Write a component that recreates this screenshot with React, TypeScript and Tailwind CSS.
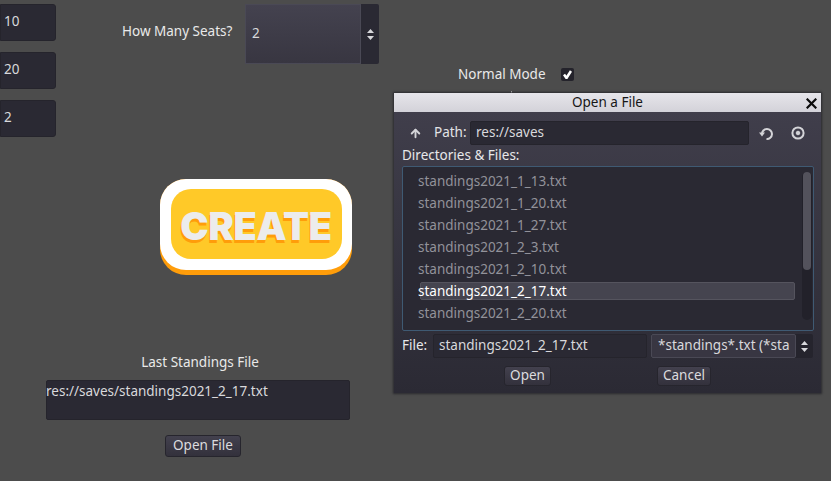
import { ArrowUp } from "lucide-react";

const files = [
  "standings2021_1_13.txt",
  "standings2021_1_20.txt",
  "standings2021_1_27.txt",
  "standings2021_2_3.txt",
  "standings2021_2_10.txt",
  "standings2021_2_17.txt",
  "standings2021_2_20.txt",
];

function UpDown() {
  return (
    <svg width="7" height="11" viewBox="0 0 7 11" className="fill-[#d8d8dc]">
      <path d="M3.5 0 7 4H0z" />
      <path d="M0 7h7l-3.5 4z" />
    </svg>
  );
}

function NumberBox({ value }: { value: string }) {
  return (
    <div className="flex h-[37px] w-[56px] items-center rounded-r-[3px] border border-[#25242c] bg-[#2a2933] pb-[2px] pl-[3px] text-[#d9d9dc]">
      {value}
    </div>
  );
}

function GodotButton({ label, className }: { label: string; className: string }) {
  return (
    <button
      className={`flex items-center justify-center rounded-[3px] border border-[#26252d] bg-gradient-to-b from-[#43414e] to-[#33313c] text-[#dcdcdf] ${className}`}
    >
      {label}
    </button>
  );
}

function FileDialog() {
  return (
    <div className="absolute left-[394px] top-[93px] flex h-[300px] w-[427px] flex-col shadow-[0_0_2px_1px_#2a2a2e]">
      <div className="relative flex h-[19px] items-center justify-center bg-gradient-to-b from-[#e6e5ea] to-[#d3d2d9] text-[#161616]">
        Open a File
        <svg width="11" height="11" viewBox="0 0 11 11" className="absolute right-[4px] top-[5px] stroke-[#0b0b0b] stroke-[2.2]">
          <path d="M.7.7l9.6 9.6M10.3.7.7 10.3" />
        </svg>
      </div>

      <div className="flex flex-1 flex-col bg-gradient-to-b from-[#403e4b] to-[#2b2a34] px-[8px]">
        <div className="mt-[9px] flex h-[24px] items-center text-[#e3e3e6]">
          <ArrowUp size={13} strokeWidth={3.5} className="ml-[7px] text-[#d4d4d8]" />
          <span className="mb-[2px] ml-[12px] w-[36px]">Path:</span>
          <div className="flex h-[24px] w-[279px] items-center rounded-[2px] border border-[#25242c] bg-[#2a2933] pb-[2px] pl-[5px] text-[#d9d9dc]">
            res://saves
          </div>
          <svg width="15" height="15" viewBox="0 0 15 15" className="ml-[10px] fill-none stroke-[#d4d4d8] stroke-[2]">
            <path d="M3 8.5a5 5 0 1 1 4.5 4.5" />
            <path d="M0 6.6h6L3 10.6z" className="fill-[#d4d4d8] stroke-none" />
          </svg>
          <svg width="14" height="14" viewBox="0 0 14 14" className="ml-[17px] fill-none stroke-[#d4d4d8]">
            <circle cx="7" cy="7" r="5.6" strokeWidth="2" />
            <circle cx="7" cy="7" r="1.8" className="fill-[#d4d4d8]" strokeWidth="1" />
          </svg>
        </div>

        <div className="mt-[1px] h-[20px] leading-[18px] text-[#e8e8ea]">Directories &amp; Files:</div>

        <div className="relative h-[165px] w-[412px] rounded-[2px] border border-[#3f5a73] bg-[#2a2933] pl-[15px] pt-[3px]">
          {files.map((name) => {
            const selected = name === "standings2021_2_17.txt";
            return (
              <div
                key={name}
                className={`h-[22px] leading-[22px] ${selected ? "text-white" : "text-[#92929a]"}`}
              >
                {selected ? (
                  <div className="relative">
                    <div className="absolute left-[2px] top-[2px] h-[18px] w-[375px] rounded-[2px] border border-[#55545e] bg-[#45444f]" />
                    <span className="relative">{name}</span>
                  </div>
                ) : (
                  name
                )}
              </div>
            );
          })}
          <div className="absolute right-[1px] top-[5px] h-[148px] w-[10px] rounded-full bg-[#22212a]">
            <div className="mx-auto h-[98px] w-[8px] rounded-full bg-[#53525c]" />
          </div>
        </div>

        <div className="mt-[3px] flex h-[24px] items-center text-[#e8e8ea]">
          <span className="mb-[2px] w-[31px]">File:</span>
          <div className="flex h-[24px] w-[214px] items-center rounded-[2px] border border-[#25242c] bg-[#2a2933] pb-[2px] pl-[5px] text-[#d9d9dc]">
            standings2021_2_17.txt
          </div>
          <div className="ml-[4px] flex h-[24px] w-[162px] items-center rounded-[2px] bg-[#25242d]">
            <div className="h-full w-[145px] overflow-hidden whitespace-nowrap rounded-[2px] border border-[#4a4955] bg-[#383642] pl-[6px] leading-[20px] text-[#d9d9dc]">
              *standings*.txt (*sta
            </div>
            <div className="flex flex-1 justify-center">
              <UpDown />
            </div>
          </div>
        </div>

        <div className="mt-[8px] flex">
          <GodotButton label="Open" className="ml-[102px] h-[20px] w-[47px] pb-[2px]" />
          <GodotButton label="Cancel" className="ml-[106px] h-[20px] w-[54px] pb-[2px]" />
        </div>
      </div>
    </div>
  );
}

export default function App() {
  return (
    <div className="relative h-[481px] w-[831px] overflow-hidden bg-[#4c4c4c] font-['Noto_Sans',sans-serif] text-[13.5px]">
      <div className="flex">
        <div className="flex w-[46px] flex-col">
          <div className="mt-[4px] flex flex-col gap-[11px]">
            <NumberBox value="10" />
            <NumberBox value="20" />
            <NumberBox value="2" />
          </div>
        </div>

        <div className="ml-[76px] flex flex-col">
          <div className="flex">
            <div className="mt-[21px] w-[123px] text-[#e9e9e9]">How Many Seats?</div>
            <div className="mt-[4px] flex h-[60px] w-[134px] rounded-[2px] bg-[#2a2933]">
              <div className="flex h-full w-[116px] items-center border border-[#4a4955] bg-gradient-to-b from-[#44424f] to-[#383641] pb-[2px] pl-[6px] text-[#d9d9dc]">
                2
              </div>
              <div className="flex flex-1 items-center justify-center">
                <UpDown />
              </div>
            </div>
            <div className="ml-[79px] mt-[64px] flex h-[20px] items-center text-[#e9e9e9]">
              <span className="w-[103px]">Normal Mode</span>
              <div className="flex h-[13px] w-[13px] items-center justify-center rounded-[2px] bg-[#24232b]">
                <svg width="9" height="9" viewBox="0 0 9 9" className="fill-none stroke-white stroke-[2.6]">
                  <path d="M1 4.5 3.5 8 8 1" />
                </svg>
              </div>
            </div>
          </div>
        </div>
      </div>

      <div className="ml-[160px] mt-[42px] h-[96px] w-[192px] rounded-[26px] bg-[#ff9d0a] pb-[5px]">
        <div className="flex h-[91px] items-start justify-center rounded-[26px] bg-white pt-[10px]">
          <div className="flex h-[70px] w-[171px] items-center justify-center rounded-[20px] bg-[#ffc928] pt-[5px] font-['Inter',sans-serif] text-[38px] font-black tracking-[-0.3px] text-[#ececec] [text-shadow:-1px_3px_0_#ff9d0a]">
            CREATE
          </div>
        </div>
      </div>

      <div className="ml-[46px] mt-[77px] flex w-[304px] flex-col items-center text-[#e9e9e9]">
        <div className="ml-[4px] h-[20px] leading-[20px]">Last Standings File</div>
        <div className="mt-[8px] h-[40px] w-full rounded-[2px] border border-[#25242c] bg-[#2a2933] indent-[-1px] text-[#d9d9dc]">
          res://saves/standings2021_2_17.txt
        </div>
        <GodotButton label="Open File" className="ml-[10px] mt-[15px] h-[22px] w-[76px] pb-[2px]" />
      </div>

      <span className="absolute left-[511px] top-[91px] h-[2px] w-px bg-[#cfcfcf]" />
      <FileDialog />
    </div>
  );
}
